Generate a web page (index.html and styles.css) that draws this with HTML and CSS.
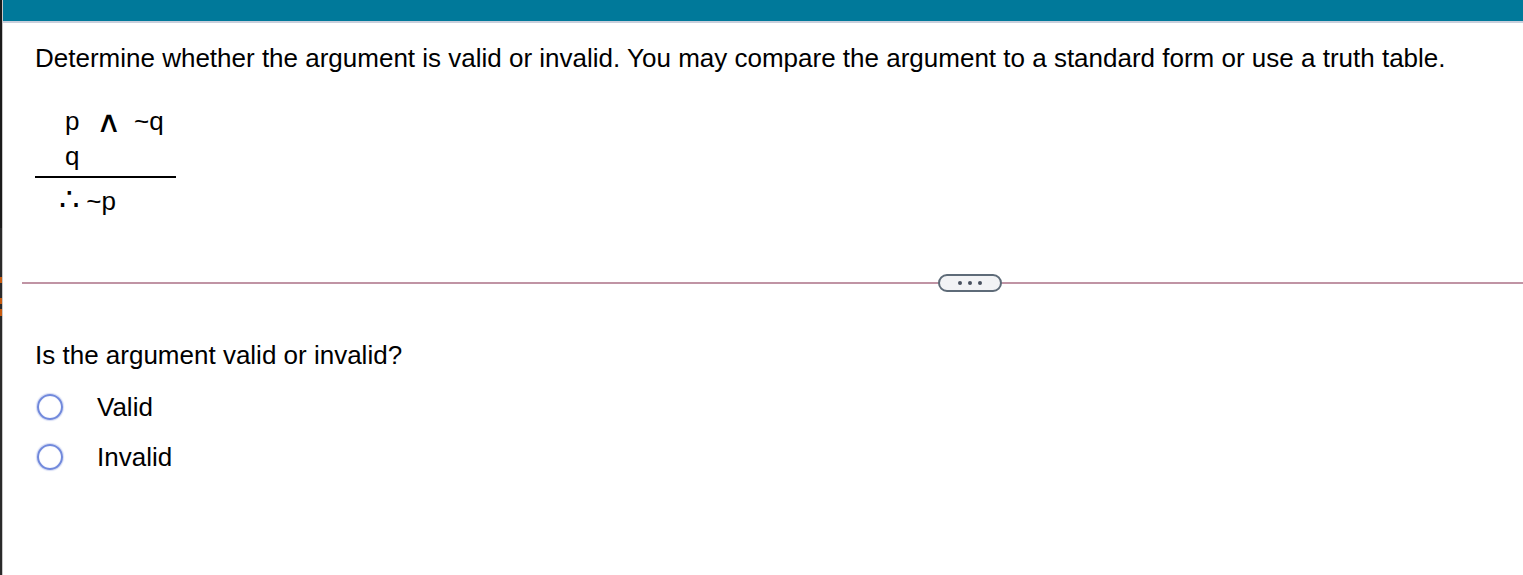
FILE: index.html
```html
<!DOCTYPE html>
<html>
<head>
<meta charset="utf-8">
<link rel="stylesheet" href="styles.css">
</head>
<body>
<div class="frame">
  <div class="edge">
    <span class="mark m1"></span>
    <span class="mark m2"></span>
    <span class="mark m3"></span>
  </div>
  <div class="main">
    <div class="topbar"></div>
    <div class="question">
      <p class="prompt">Determine whether the argument is valid or invalid. You may compare the argument to a standard form or use a truth table.</p>
      <div class="argument">
        <div class="premise">p<span class="op">∧</span>~q</div>
        <div class="premise">q</div>
        <div class="rule"></div>
        <div class="conclusion"><span class="therefore">∴</span>~p</div>
      </div>
    </div>
    <div class="divider">
      <span class="more"><i></i><i></i><i></i></span>
    </div>
    <div class="answer">
      <p class="ask">Is the argument valid or invalid?</p>
      <label class="option"><span class="radio"></span><span>Valid</span></label>
      <label class="option"><span class="radio"></span><span>Invalid</span></label>
    </div>
  </div>
</div>
</body>
</html>
```

FILE: styles.css
```css
html, body {
  margin: 0;
  padding: 0;
  background: #ffffff;
}
body {
  font-family: "Liberation Sans", Arial, sans-serif;
  color: #000;
  width: 1523px;
  height: 575px;
  overflow: hidden;
  font-size: 26px;
}
.frame {
  display: flex;
  height: 575px;
}
.edge {
  width: 2px;
  flex: none;
  position: relative;
  background: linear-gradient(to bottom, #1a1a1a 0, #1a1a1a 228px, #2a2a2a 228px);
  box-shadow: 1px 0 0 #c8c8c8;
}
.mark {
  position: absolute;
  left: 0;
  width: 2px;
  background: #c75a10;
}
.m1 { top: 277px; height: 6px; }
.m2 { top: 298px; height: 6px; }
.m3 { top: 309px; height: 7px; }
.main {
  flex: 1;
  display: flex;
  flex-direction: column;
}
.topbar {
  height: 21px;
  background: #00799a;
  border-bottom: 2px solid #c9cfdc;
  flex: none;
}
.question {
  padding-left: 33px;
}
.prompt {
  margin: 0;
  padding-top: 20px;
  line-height: 30px;
}
.argument {
  margin-top: 33px;
  width: 141px;
}
.premise {
  padding-left: 30px;
  line-height: 30px;
  height: 35px;
  white-space: nowrap;
}
.op {
  display: inline-block;
  margin: 0 16px 0 21px;
  font-family: "DejaVu Sans", sans-serif;
  font-size: 24px;
  line-height: 1px;
  transform: scale(1.45, 1.25);
  transform-origin: 50% 100%;
}
.rule {
  height: 2px;
  background: #000;
}
.conclusion {
  padding-left: 24px;
  line-height: 30px;
  height: 30px;
  margin-top: 8px;
  white-space: nowrap;
}
.therefore {
  font-family: "DejaVu Sans", sans-serif;
  font-size: 32px;
  line-height: 1px;
  margin-right: 7px;
}
.divider {
  margin-top: 66px;
  margin-left: 20px;
  height: 2px;
  flex: none;
  background: #c094a4;
  position: relative;
}
.more {
  position: absolute;
  left: 916px;
  top: -8px;
  width: 60px;
  height: 14px;
  border: 2px solid #5e6b78;
  border-radius: 9px;
  background: #f2f3f5;
  display: flex;
  align-items: center;
  justify-content: center;
  gap: 6px;
}
.more i {
  width: 4px;
  height: 4px;
  border-radius: 50%;
  background: #4a5260;
}
.answer {
  padding-left: 33px;
  padding-top: 56px;
}
.ask {
  margin: 0 0 12px;
  line-height: 30px;
}
.option {
  display: flex;
  align-items: center;
  height: 50px;
  line-height: 30px;
}
.radio {
  width: 26px;
  height: 26px;
  border: 2px solid #7189dc;
  border-radius: 50%;
  margin-left: 2px;
  margin-right: 34px;
  box-sizing: border-box;
  box-shadow: 0 0 1px 1px rgba(110, 134, 219, 0.3), inset 0 0 1px rgba(110, 134, 219, 0.4);
}
```
